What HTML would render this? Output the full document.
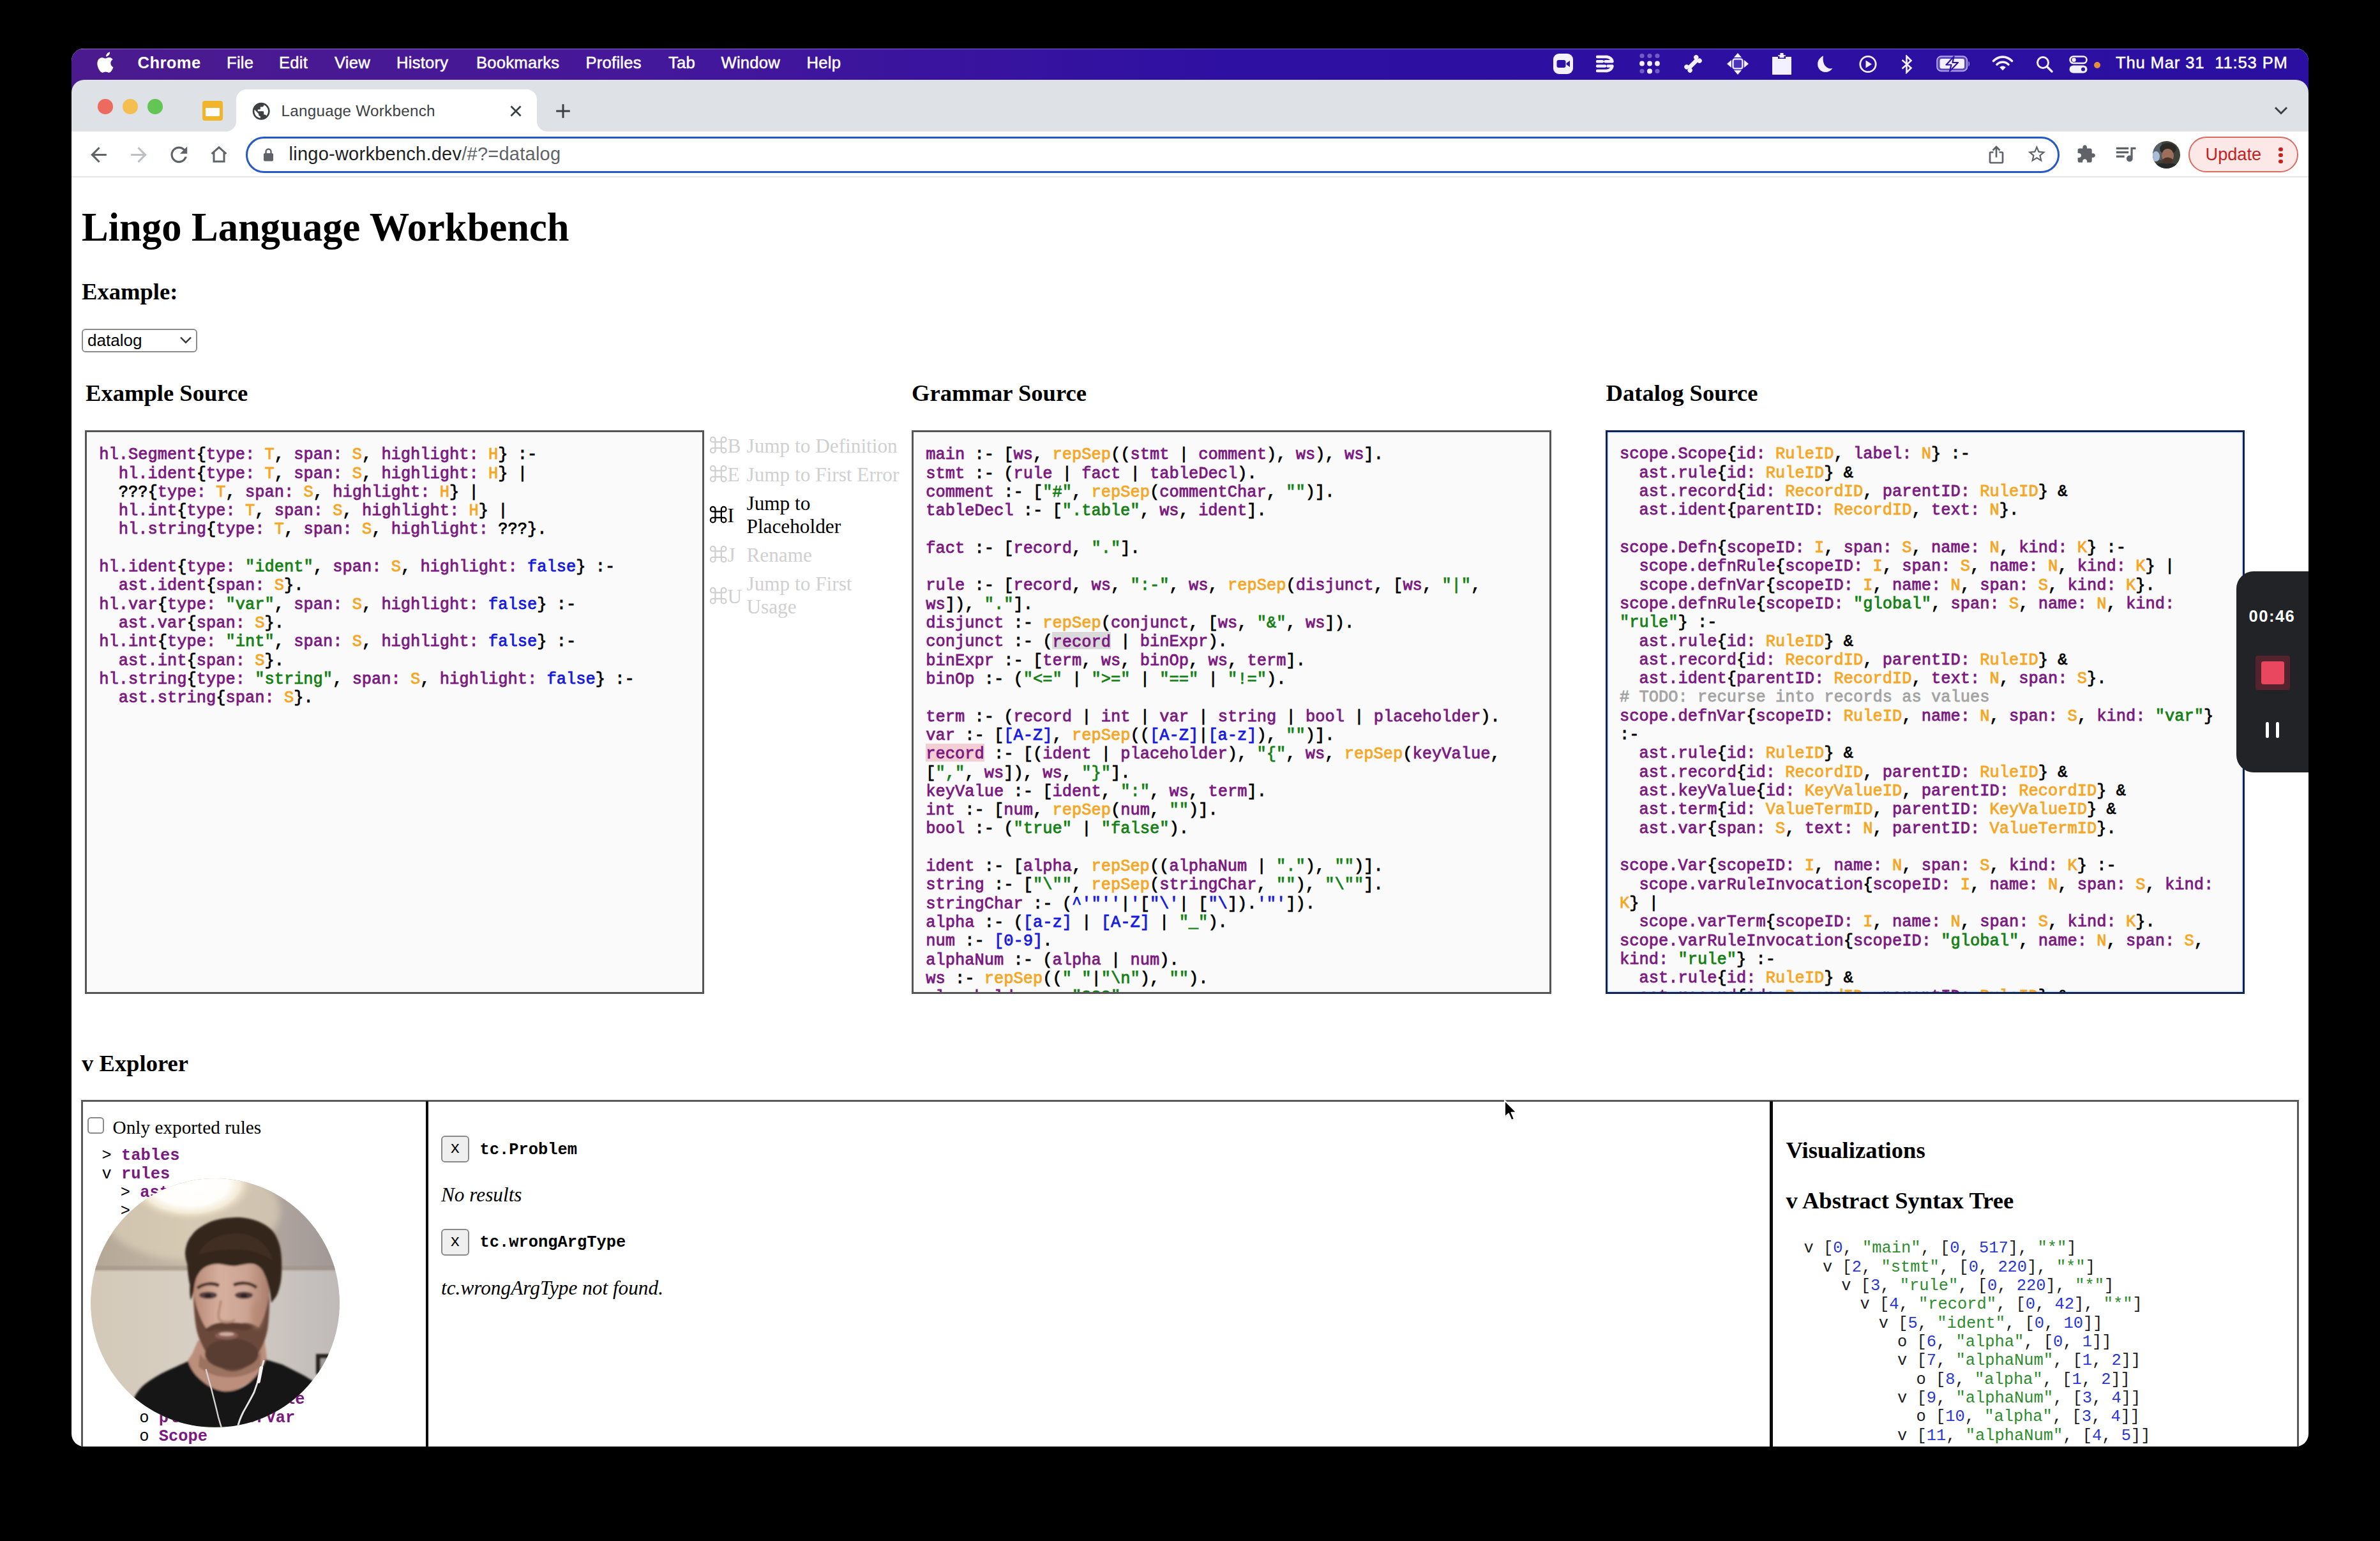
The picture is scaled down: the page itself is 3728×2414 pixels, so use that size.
<!DOCTYPE html>
<html><head><meta charset="utf-8"><title>Language Workbench</title>
<style>
*{box-sizing:border-box;margin:0;padding:0}
html,body{width:3728px;height:2414px;background:#000;overflow:hidden}
body{position:relative;font-family:"Liberation Serif",serif;color:#000}
.abs{position:absolute}
#win{position:absolute;left:112px;top:76px;width:3504px;height:2190px;border-radius:19.5px 19.5px 20px 20px;overflow:hidden;background:#fff}
#o{position:absolute;left:-112px;top:-76px;width:3728px;height:2414px}
#menubar{position:absolute;left:112px;top:76px;width:3504px;height:70px;box-shadow:inset 0 1.5px 0 rgba(255,255,255,.22);background:linear-gradient(90deg,#4b1a8e 0%,#45189a 25%,#2e10a2 52%,#2a0fa0 100%)}
#tabstrip{position:absolute;left:112px;top:125px;width:3504px;height:82px;background:#dee1e6;border-radius:20px 20px 0 0}
#toolbar{position:absolute;left:112px;top:206px;width:3504px;height:72px;background:#fff;border-bottom:2px solid #e3e4e7}
.mi{color:#fff;-webkit-text-stroke:0.5px #fff;letter-spacing:0.25px}
.b7{font-weight:bold}
.it{font-style:italic}
.ed{position:absolute;top:674px;height:883px;border:3px solid #555;background:#fafafa;overflow:hidden;padding:21.2px 0 0 19.2px}
.code{font-family:"Liberation Mono",monospace;font-weight:normal;-webkit-text-stroke:0.8px currentColor;font-size:25.41px;line-height:29.32px}
.code .l{height:29.32px;white-space:pre}
.i{color:#7b1780}.v{color:#f5a623}.s{color:#138013}.b{color:#1418e0}.c{color:#a3a3a3}
.hg{padding-top:1.8px;background:linear-gradient(#dadada,#dadada) no-repeat 0 0/100% 27.2px}.hp{padding-top:1.9px;background:linear-gradient(#f4ced5,#f4ced5) no-repeat 0 0/100% 28.4px}
.dis{color:#d0d0d0}
.ast{-webkit-text-stroke:0;color:#1c1c1c}.ast .s{color:#2c8c2c}.ast .b{color:#2a36d6}
.hb{font-weight:bold;-webkit-text-stroke:0}
.xb{position:absolute;width:43.6px;height:42px;border:2.4px solid #8a8a8a;border-radius:6px;background:#efefef;font-family:"Liberation Mono",monospace;font-size:25.4px;line-height:38px;text-align:center;color:#000}
</style></head><body>
<div id="win"><div id="o">
<div id="menubar"></div>
<svg class="abs" style="left:149px;top:80px" width="30" height="35.5" viewBox="0 0 170 205"><path fill="#fff" d="M150.4 172.6c-7.4 11-15.2 21.9-27.2 22.1-12 .2-15.8-7.1-29.4-7.1-13.7 0-17.9 6.9-29.2 7.3-11.7.4-20.6-11.8-28-22.8C21.3 150.1 9.700 108.600 25.400 81.200 33.200 67.600 47.100 59 62.200 58.800c11.500-.2 22.300 7.7 29.400 7.700 7 0 20.200-9.500 34-8.100 5.800.2 22.100 2.300 32.500 17.600-.8.5-19.400 11.300-19.200 33.800.3 26.900 23.600 35.800 23.900 35.900-.2.600-3.700 12.700-12.400 26.900zM106.500 22.400c6.200-7.500 16.800-13.100 25.500-13.600 1.100 10.200-3 20.400-9 27.700-6.100 7.300-16 13-25.800 12.200-1.300-9.900 3.600-20.300 9.300-26.300z"/></svg>
<div class="mi b7" style="position:absolute;white-space:nowrap;font-family:'Liberation Sans',sans-serif;font-size:25.6px;line-height:30.72px;left:215.5px;top:82.57px;-webkit-text-stroke:0;letter-spacing:0.4px">Chrome</div>
<div class="mi" style="position:absolute;white-space:nowrap;font-family:'Liberation Sans',sans-serif;font-size:25.6px;line-height:30.72px;left:355px;top:82.57px">File</div>
<div class="mi" style="position:absolute;white-space:nowrap;font-family:'Liberation Sans',sans-serif;font-size:25.6px;line-height:30.72px;left:437px;top:82.57px">Edit</div>
<div class="mi" style="position:absolute;white-space:nowrap;font-family:'Liberation Sans',sans-serif;font-size:25.6px;line-height:30.72px;left:524px;top:82.57px">View</div>
<div class="mi" style="position:absolute;white-space:nowrap;font-family:'Liberation Sans',sans-serif;font-size:25.6px;line-height:30.72px;left:621px;top:82.57px">History</div>
<div class="mi" style="position:absolute;white-space:nowrap;font-family:'Liberation Sans',sans-serif;font-size:25.6px;line-height:30.72px;left:746px;top:82.57px">Bookmarks</div>
<div class="mi" style="position:absolute;white-space:nowrap;font-family:'Liberation Sans',sans-serif;font-size:25.6px;line-height:30.72px;left:917.5px;top:82.57px">Profiles</div>
<div class="mi" style="position:absolute;white-space:nowrap;font-family:'Liberation Sans',sans-serif;font-size:25.6px;line-height:30.72px;left:1047px;top:82.57px">Tab</div>
<div class="mi" style="position:absolute;white-space:nowrap;font-family:'Liberation Sans',sans-serif;font-size:25.6px;line-height:30.72px;left:1129.5px;top:82.57px">Window</div>
<div class="mi" style="position:absolute;white-space:nowrap;font-family:'Liberation Sans',sans-serif;font-size:25.6px;line-height:30.72px;left:1263.5px;top:82.57px">Help</div>
<div class="mi" style="position:absolute;white-space:nowrap;font-family:'Liberation Sans',sans-serif;font-size:25.6px;line-height:30.72px;left:3314px;top:82.57px;letter-spacing:0.85px">Thu Mar 31&nbsp; 11:53 PM</div>
<!-- zoom -->
<svg class="abs" style="left:2433px;top:84px" width="31" height="32" viewBox="0 0 31 32"><rect x="0" y="0" width="31" height="32" rx="9" fill="#f3f0ff"/><rect x="5.500" y="10" width="14" height="12" rx="3" fill="#2d12a6"/><path d="M20.500 15L26 11v10l-5.500-4z" fill="#2d12a6"/></svg>
<!-- lines D -->
<svg class="abs" style="left:2500px;top:86px" width="28" height="28" viewBox="0 0 28 28"><g fill="none" stroke="#f3f0ff" stroke-width="4.500" stroke-linecap="round"><path d="M2 3H17"/><path d="M2 10.300H10"/><path d="M14.500 10.300H25"/><path d="M2 17.600H14"/><path d="M18.500 17.600H25"/><path d="M2 25H17"/><path d="M17 3C22 4 25 7 25.500 10.300"/><path d="M17 25C22 24 25 21 25.500 17.600"/></g></svg>
<!-- dots -->
<svg class="abs" style="left:2567px;top:83px" width="34" height="34" viewBox="0 0 34 34"><g fill="#f3f0ff"><circle cx="5" cy="4.500" r="3.600" opacity=".35"/><circle cx="17" cy="4.500" r="3.600" opacity=".35"/><circle cx="29" cy="4.500" r="3.600" opacity=".35"/><circle cx="5" cy="16.500" r="3.900"/><circle cx="17" cy="16.500" r="3.900"/><circle cx="29" cy="16.500" r="3.900"/><circle cx="5" cy="28.500" r="3.600" opacity=".35"/><circle cx="17" cy="28.500" r="4"/><circle cx="29" cy="28.500" r="3.600" opacity=".35"/></g></svg>
<!-- bone -->
<svg class="abs" style="left:2637px;top:85px" width="30" height="30" viewBox="0 0 30 30"><g transform="rotate(-45 15 15)" fill="#f3f0ff"><rect x="5" y="11.800" width="20" height="6.400" rx="1"/><circle cx="4.500" cy="11.300" r="3.700"/><circle cx="4.500" cy="18.700" r="3.700"/><circle cx="25.500" cy="11.300" r="3.700"/><circle cx="25.500" cy="18.700" r="3.700"/></g></svg>
<!-- move -->
<svg class="abs" style="left:2704px;top:82px" width="36" height="36" viewBox="0 0 36 36"><g fill="#f3f0ff"><path d="M18 1L24 8H12Z"/><path d="M18 35L24 28H12Z"/><path d="M1 18L8 12V24Z"/><path d="M35 18L28 12V24Z"/></g><rect x="10.500" y="10.500" width="15" height="15" rx="3" fill="#4a34b8" stroke="#e6e0ff" stroke-width="2.600"/></svg>
<!-- clipboard -->
<svg class="abs" style="left:2776px;top:83px" width="30" height="34" viewBox="0 0 30 34"><path d="M0 6H9V3.500H12.500V0H17.500V3.500H21V6H30V34H0Z" fill="#f3f0ff"/><rect x="9" y="5" width="12" height="4" fill="#2d12a6"/><rect x="11.500" y="3" width="7" height="4.500" fill="#f3f0ff"/></svg>
<!-- moon -->
<svg class="abs" style="left:2844px;top:87px" width="27" height="27" viewBox="0 0 27 27"><path d="M12 0.500C3 4.500 1 14.500 5.500 21C10.500 27.800 21 28 26.500 20C18 22.500 9.500 14.500 12 0.500Z" fill="#f3f0ff"/></svg>
<!-- play -->
<svg class="abs" style="left:2911px;top:86px" width="30" height="30" viewBox="0 0 30 30"><circle cx="15" cy="14.500" r="12.200" fill="none" stroke="#f3f0ff" stroke-width="2.800"/><path d="M11.500 8.500L21 14.500L11.500 20.500Z" fill="#f3f0ff"/></svg>
<!-- bluetooth -->
<svg class="abs" style="left:2976px;top:86px" width="22" height="30" viewBox="0 0 22 30"><path d="M3.500 8L17.500 20.500L10.500 27.500V2L17.500 9L3.500 21.500" fill="none" stroke="#f3f0ff" stroke-width="2.600" stroke-linejoin="miter"/></svg>
<!-- battery -->
<svg class="abs" style="left:3033px;top:87px" width="54" height="26" viewBox="0 0 54 26"><rect x="1.200" y="1.200" width="47" height="23" rx="6.500" fill="#5b47bd" stroke="#b5a8ef" stroke-width="2"/><rect x="5.500" y="5" width="38.500" height="15.500" rx="3" fill="#f3f0ff"/><path d="M50.500 9c2 .7 2 7.300 0 8z" fill="#b5a8ef"/><path d="M27.500 1.500L15.500 14.500H23.500L21 24.500L34 11H25.500Z" fill="#f3f0ff" stroke="#2d12a6" stroke-width="2.200" stroke-linejoin="round"/></svg>
<!-- wifi -->
<svg class="abs" style="left:3120px;top:86px" width="34" height="26" viewBox="0 0 34 26"><g fill="none" stroke="#f3f0ff" stroke-width="3.600" stroke-linecap="round"><path d="M2.500 9.500C11 1 23 1 31.500 9.500"/><path d="M8 15C13 10 21 10 26 15"/></g><path d="M17 24.500L12.200 19.300C15 16.900 19 16.900 21.800 19.300Z" fill="#f3f0ff"/></svg>
<!-- search -->
<svg class="abs" style="left:3189px;top:87px" width="28" height="28" viewBox="0 0 28 28"><circle cx="11" cy="11" r="8.500" fill="none" stroke="#f3f0ff" stroke-width="3"/><path d="M17.500 17.500L25 25" stroke="#f3f0ff" stroke-width="3.400" stroke-linecap="round"/></svg>
<!-- control center -->
<svg class="abs" style="left:3241px;top:87px" width="30" height="28" viewBox="0 0 30 28"><rect x="1.500" y="1.500" width="26" height="10.500" rx="5.200" fill="none" stroke="#f3f0ff" stroke-width="2.600"/><circle cx="7.500" cy="6.800" r="3.200" fill="#f3f0ff"/><rect x="0.500" y="15.500" width="28" height="12" rx="6" fill="#f3f0ff"/><circle cx="22" cy="21.500" r="3" fill="#2d12a6"/></svg>
<div class="abs" style="left:3279.500px;top:97px;width:10px;height:10px;border-radius:50%;background:#e58d3c"></div>
<div id="tabstrip"></div>
<div class="abs" style="left:153.1px;top:155.2px;width:23.6px;height:23.6px;border-radius:50%;background:#ed6a5e"></div>
<div class="abs" style="left:192.3px;top:155.2px;width:23.6px;height:23.6px;border-radius:50%;background:#f5bf4f"></div>
<div class="abs" style="left:231.2px;top:155.2px;width:23.6px;height:23.6px;border-radius:50%;background:#62c554"></div>
<div class="abs" style="left:317px;top:158px;width:32px;height:31px;border-radius:4px;background:#f1b52c"></div>
<div class="abs" style="left:322px;top:169px;width:22px;height:13px;border-radius:1px;background:#fff"></div>
<!-- active tab -->
<div class="abs" style="left:370px;top:140px;width:471px;height:68px;background:#fff;border-radius:16px 16px 0 0"></div>
<svg class="abs" style="left:354px;top:190px" width="16" height="16"><path d="M16 16H0A16 16 0 0 0 16 0Z" fill="#fff"/></svg>
<svg class="abs" style="left:841px;top:190px" width="16" height="16"><path d="M0 16H16A16 16 0 0 1 0 0Z" fill="#fff"/></svg>
<div class="abs" style="position:absolute;white-space:nowrap;font-family:'Liberation Sans',sans-serif;font-size:24.2px;line-height:29.04px;left:440.5px;top:158.69px;color:#3c4043;letter-spacing:0.28px">Language Workbench</div>
<div id="toolbar"></div>
<div class="abs" style="left:385px;top:214px;width:2841px;height:57px;border:3px solid #2459c8;border-radius:29px;background:#fff"></div>
<div class="abs" style="position:absolute;white-space:nowrap;font-family:'Liberation Sans',sans-serif;font-size:29px;line-height:34.8px;left:452.5px;top:224.35px;color:#5f6368;letter-spacing:0.25px"><span style="color:#202124">lingo-workbench.dev</span>/#?=datalog</div>
<div class="abs" style="left:3428px;top:214px;width:172px;height:56px;border:2px solid #dc6b62;border-radius:28px;background:#fce9e7"></div>
<div class="abs" style="position:absolute;white-space:nowrap;font-family:'Liberation Sans',sans-serif;font-size:27.2px;line-height:32.64px;left:3454.5px;top:225.86px;color:#c5221f">Update</div>
<!-- globe favicon -->
<svg class="abs" style="left:393px;top:157.700px" width="32.400" height="32.400" viewBox="0 0 24 24"><path fill="#3c4043" d="M12 2C6.480 2 2 6.480 2 12s4.480 10 10 10 10-4.480 10-10S17.520 2 12 2zm-1 17.930c-3.950-.49-7-3.850-7-7.930 0-.62.080-1.210.21-1.790L9 15v1c0 1.100.9 2 2 2v1.930zm6.900-2.540c-.26-.81-1-1.390-1.900-1.390h-1v-3c0-.55-.45-1-1-1H8v-2h2c.55 0 1-.45 1-1V7h2c1.100 0 2-.9 2-2v-.41c2.930 1.190 5 4.060 5 7.410 0 2.080-.8 3.970-2.100 5.390z"/></svg>
<!-- tab close -->
<svg class="abs" style="left:797.500px;top:164px" width="20" height="20" viewBox="0 0 20 20"><path d="M2.500 2.500L17.500 17.500M17.500 2.500L2.500 17.500" stroke="#3c4043" stroke-width="2.800" fill="none"/></svg>
<!-- plus -->
<svg class="abs" style="left:869.500px;top:162px" width="24" height="24" viewBox="0 0 24 24"><path d="M12 1.200V22.800M1.200 12H22.800" stroke="#3c4043" stroke-width="3" fill="none"/></svg>
<!-- chevron -->
<svg class="abs" style="left:3562px;top:166px" width="22" height="15" viewBox="0 0 22 15"><path d="M2 2.500L11 11.500L20 2.500" stroke="#3c4043" stroke-width="3" fill="none"/></svg>
<!-- back -->
<svg class="abs" style="left:136.300px;top:223.500px" width="37" height="37" viewBox="0 0 24 24"><path fill="#5f6368" d="M20 11H7.830l5.590-5.590L12 4l-8 8 8 8 1.410-1.410L7.830 13H20v-2z"/></svg>
<!-- forward -->
<svg class="abs" style="left:198.900px;top:223.500px" width="37" height="37" viewBox="0 0 24 24"><path fill="#bcbfc3" d="M12 4l-1.410 1.410L16.170 11H4v2h12.170l-5.580 5.590L12 20l8-8z"/></svg>
<!-- reload -->
<svg class="abs" style="left:261px;top:223.300px" width="38.700" height="38.700" viewBox="0 0 24 24"><path fill="#5f6368" d="M17.650 6.350C16.200 4.900 14.210 4 12 4c-4.420 0-7.990 3.580-7.990 8s3.570 8 7.990 8c3.730 0 6.840-2.550 7.730-6h-2.080c-.82 2.330-3.040 4-5.650 4-3.310 0-6-2.690-6-6s2.690-6 6-6c1.660 0 3.140.69 4.220 1.780L13 11h7V4l-2.350 2.350z"/></svg>
<!-- home -->
<svg class="abs" style="left:328px;top:227px" width="30" height="30" viewBox="0 0 30 30"><path d="M3.500 14L15 3.800L26.500 14M7 11.500V26H23V11.500" fill="none" stroke="#5f6368" stroke-width="3" stroke-linejoin="miter"/></svg>
<!-- lock -->
<svg class="abs" style="left:411px;top:231px" width="19" height="23" viewBox="0 0 19 23"><rect x="2" y="9" width="15" height="12.500" rx="1.800" fill="#5f6368"/><path d="M5.500 10V6.500a4 4 0 0 1 8 0V10" fill="none" stroke="#5f6368" stroke-width="2.400"/></svg>
<!-- share -->
<svg class="abs" style="left:3114px;top:227px" width="26" height="31" viewBox="0 0 26 31"><path d="M8.500 11.500H4.500a1.500 1.500 0 0 0-1.500 1.500V26.500a1.500 1.500 0 0 0 1.500 1.500H21.500a1.500 1.500 0 0 0 1.500-1.500V13a1.500 1.500 0 0 0-1.500-1.500H17.500" fill="none" stroke="#5f6368" stroke-width="2.700"/><path d="M13 19.500V4M7.500 8.500L13 3L18.500 8.500" fill="none" stroke="#5f6368" stroke-width="2.700"/></svg>
<!-- star -->
<svg class="abs" style="left:3173.600px;top:225.300px" width="32.800" height="32.800" viewBox="0 0 24 24"><path fill="#5f6368" d="M22 9.240l-7.190-.62L12 2 9.190 8.630 2 9.240l5.460 4.730L5.820 21 12 17.270 18.180 21l-1.630-7.030L22 9.240zM12 15.400l-3.760 2.270 1-4.280-3.320-2.880 4.380-.38L12 6.100l1.710 4.040 4.380.38-3.320 2.880 1 4.280L12 15.400z"/></svg>
<!-- puzzle -->
<svg class="abs" style="left:3252px;top:226.400px" width="31.200" height="31.200" viewBox="0 0 24 24"><path fill="#5f6368" d="M20.500 11H19V7c0-1.100-.9-2-2-2h-4V3.500C13 2.120 11.880 1 10.500 1S8 2.120 8 3.500V5H4c-1.100 0-1.990.9-1.990 2v3.800H3.500c1.490 0 2.700 1.210 2.700 2.700s-1.210 2.700-2.700 2.700H2V20c0 1.100.9 2 2 2h3.800v-1.500c0-1.490 1.210-2.700 2.700-2.700 1.490 0 2.700 1.210 2.700 2.700V22H17c1.100 0 2-.9 2-2v-4h1.500c1.380 0 2.500-1.120 2.500-2.500S21.880 11 20.500 11z"/></svg>
<!-- media -->
<svg class="abs" style="left:3310px;top:220.800px" width="38.700" height="38.700" viewBox="0 0 24 24"><path fill="#5f6368" d="M15 6H3v2h12V6zm0 4H3v2h12v-2zM3 16h8v-2H3v2zM17 6v8.180c-.31-.11-.65-.18-1-.18-1.660 0-3 1.340-3 3s1.340 3 3 3 3-1.340 3-3V8h3V6h-5z"/></svg>
<!-- avatar -->
<svg class="abs" style="left:3371.500px;top:220.700px" width="43" height="43" viewBox="0 0 43 43"><defs><clipPath id="av"><circle cx="21.500" cy="21.500" r="21.500"/></clipPath></defs><g clip-path="url(#av)"><rect width="43" height="43" fill="#3e4238"/><rect x="0" y="0" width="14" height="30" fill="#56606a"/><ellipse cx="5" cy="24" rx="6" ry="8" fill="#a9bdd6"/><ellipse cx="24" cy="12" rx="13" ry="9" fill="#2c2a24"/><ellipse cx="23.500" cy="23" rx="9.500" ry="11" fill="#9c6f5c"/><ellipse cx="23.500" cy="31" rx="8" ry="5.500" fill="#4a3329"/><path d="M0 43C4 34 14 33 22 36C30 33 40 35 43 43Z" fill="#26282a"/></g></svg>
<!-- dots -->
<div class="abs" style="left:3569.400px;top:231px;width:6.200px;height:6.200px;border-radius:50%;background:#c5221f"></div>
<div class="abs" style="left:3569.400px;top:240.200px;width:6.200px;height:6.200px;border-radius:50%;background:#c5221f"></div>
<div class="abs" style="left:3569.400px;top:249.500px;width:6.200px;height:6.200px;border-radius:50%;background:#c5221f"></div>
<div class="b7" style="position:absolute;white-space:nowrap;font-family:'Liberation Serif',serif;font-size:62.55px;line-height:75.06px;left:128px;top:319.36px">Lingo Language Workbench</div>
<div class="b7" style="position:absolute;white-space:nowrap;font-family:'Liberation Serif',serif;font-size:36.6px;line-height:43.92px;left:128px;top:434.69px">Example:</div>
<div class="abs" style="left:128px;top:515px;width:181px;height:37px;border:2.2px solid #8c8c8c;border-radius:6px;background:#fff"></div>
<div style="position:absolute;white-space:nowrap;font-family:'Liberation Sans',sans-serif;font-size:26.06px;line-height:31.27px;left:137px;top:518.34px">datalog</div>
<svg class="abs" style="left:281px;top:526px" width="20" height="14" viewBox="0 0 20 14"><path d="M2 2.5L10 10.5L18 2.5" fill="none" stroke="#333" stroke-width="2.4"/></svg>
<div class="b7" style="position:absolute;white-space:nowrap;font-family:'Liberation Serif',serif;font-size:36.6px;line-height:43.92px;left:134px;top:593.69px">Example Source</div>
<div class="b7" style="position:absolute;white-space:nowrap;font-family:'Liberation Serif',serif;font-size:36.6px;line-height:43.92px;left:1428px;top:593.69px">Grammar Source</div>
<div class="b7" style="position:absolute;white-space:nowrap;font-family:'Liberation Serif',serif;font-size:36.6px;line-height:43.92px;left:2515.5px;top:593.69px">Datalog Source</div>
<div class="ed code" style="left:133px;width:970px"><div class="l"><span class="i">hl.Segment</span>{<span class="i">type:</span> <span class="v">T</span>, <span class="i">span:</span> <span class="v">S</span>, <span class="i">highlight:</span> <span class="v">H</span>} :-</div>
<div class="l">  <span class="i">hl.ident</span>{<span class="i">type:</span> <span class="v">T</span>, <span class="i">span:</span> <span class="v">S</span>, <span class="i">highlight:</span> <span class="v">H</span>} |</div>
<div class="l">  ???{<span class="i">type:</span> <span class="v">T</span>, <span class="i">span:</span> <span class="v">S</span>, <span class="i">highlight:</span> <span class="v">H</span>} |</div>
<div class="l">  <span class="i">hl.int</span>{<span class="i">type:</span> <span class="v">T</span>, <span class="i">span:</span> <span class="v">S</span>, <span class="i">highlight:</span> <span class="v">H</span>} |</div>
<div class="l">  <span class="i">hl.string</span>{<span class="i">type:</span> <span class="v">T</span>, <span class="i">span:</span> <span class="v">S</span>, <span class="i">highlight:</span> ???}.</div>
<div class="l">&nbsp;</div>
<div class="l"><span class="i">hl.ident</span>{<span class="i">type:</span> <span class="s">"ident"</span>, <span class="i">span:</span> <span class="v">S</span>, <span class="i">highlight:</span> <span class="b">false</span>} :-</div>
<div class="l">  <span class="i">ast.ident</span>{<span class="i">span:</span> <span class="v">S</span>}.</div>
<div class="l"><span class="i">hl.var</span>{<span class="i">type:</span> <span class="s">"var"</span>, <span class="i">span:</span> <span class="v">S</span>, <span class="i">highlight:</span> <span class="b">false</span>} :-</div>
<div class="l">  <span class="i">ast.var</span>{<span class="i">span:</span> <span class="v">S</span>}.</div>
<div class="l"><span class="i">hl.int</span>{<span class="i">type:</span> <span class="s">"int"</span>, <span class="i">span:</span> <span class="v">S</span>, <span class="i">highlight:</span> <span class="b">false</span>} :-</div>
<div class="l">  <span class="i">ast.int</span>{<span class="i">span:</span> <span class="v">S</span>}.</div>
<div class="l"><span class="i">hl.string</span>{<span class="i">type:</span> <span class="s">"string"</span>, <span class="i">span:</span> <span class="v">S</span>, <span class="i">highlight:</span> <span class="b">false</span>} :-</div>
<div class="l">  <span class="i">ast.string</span>{<span class="i">span:</span> <span class="v">S</span>}.</div></div>
<div class="ed code" style="left:1428px;width:1002px"><div class="l"><span class="i">main</span> :- [<span class="i">ws</span>, <span class="v">repSep</span>((<span class="i">stmt</span> | <span class="i">comment</span>), <span class="i">ws</span>), <span class="i">ws</span>].</div>
<div class="l"><span class="i">stmt</span> :- (<span class="i">rule</span> | <span class="i">fact</span> | <span class="i">tableDecl</span>).</div>
<div class="l"><span class="i">comment</span> :- [<span class="s">"#"</span>, <span class="v">repSep</span>(<span class="i">commentChar</span>, <span class="s">""</span>)].</div>
<div class="l"><span class="i">tableDecl</span> :- [<span class="s">".table"</span>, <span class="i">ws</span>, <span class="i">ident</span>].</div>
<div class="l">&nbsp;</div>
<div class="l"><span class="i">fact</span> :- [<span class="i">record</span>, <span class="s">"."</span>].</div>
<div class="l">&nbsp;</div>
<div class="l"><span class="i">rule</span> :- [<span class="i">record</span>, <span class="i">ws</span>, <span class="s">":-"</span>, <span class="i">ws</span>, <span class="v">repSep</span>(<span class="i">disjunct</span>, [<span class="i">ws</span>, <span class="s">"|"</span>,</div>
<div class="l"><span class="i">ws</span>]), <span class="s">"."</span>].</div>
<div class="l"><span class="i">disjunct</span> :- <span class="v">repSep</span>(<span class="i">conjunct</span>, [<span class="i">ws</span>, <span class="s">"&amp;"</span>, <span class="i">ws</span>]).</div>
<div class="l"><span class="i">conjunct</span> :- (<span class="i hg">record</span> | <span class="i">binExpr</span>).</div>
<div class="l"><span class="i">binExpr</span> :- [<span class="i">term</span>, <span class="i">ws</span>, <span class="i">binOp</span>, <span class="i">ws</span>, <span class="i">term</span>].</div>
<div class="l"><span class="i">binOp</span> :- (<span class="s">"&lt;="</span> | <span class="s">"&gt;="</span> | <span class="s">"=="</span> | <span class="s">"!="</span>).</div>
<div class="l">&nbsp;</div>
<div class="l"><span class="i">term</span> :- (<span class="i">record</span> | <span class="i">int</span> | <span class="i">var</span> | <span class="i">string</span> | <span class="i">bool</span> | <span class="i">placeholder</span>).</div>
<div class="l"><span class="i">var</span> :- [<span class="b">[A-Z]</span>, <span class="v">repSep</span>((<span class="b">[A-Z]</span>|<span class="b">[a-z]</span>), <span class="s">""</span>)].</div>
<div class="l"><span class="i hp">record</span> :- [(<span class="i">ident</span> | <span class="i">placeholder</span>), <span class="s">"{"</span>, <span class="i">ws</span>, <span class="v">repSep</span>(<span class="i">keyValue</span>,</div>
<div class="l">[<span class="s">","</span>, <span class="i">ws</span>]), <span class="i">ws</span>, <span class="s">"}"</span>].</div>
<div class="l"><span class="i">keyValue</span> :- [<span class="i">ident</span>, <span class="s">":"</span>, <span class="i">ws</span>, <span class="i">term</span>].</div>
<div class="l"><span class="i">int</span> :- [<span class="i">num</span>, <span class="v">repSep</span>(<span class="i">num</span>, <span class="s">""</span>)].</div>
<div class="l"><span class="i">bool</span> :- (<span class="s">"true"</span> | <span class="s">"false"</span>).</div>
<div class="l">&nbsp;</div>
<div class="l"><span class="i">ident</span> :- [<span class="i">alpha</span>, <span class="v">repSep</span>((<span class="i">alphaNum</span> | <span class="s">"."</span>), <span class="s">""</span>)].</div>
<div class="l"><span class="i">string</span> :- [<span class="s">"\""</span>, <span class="v">repSep</span>(<span class="i">stringChar</span>, <span class="s">""</span>), <span class="s">"\""</span>].</div>
<div class="l"><span class="i">stringChar</span> :- (<span class="b">^'"''</span>|<span class="b">'</span>[<span class="b">"\'</span>| [<span class="b">"\</span>]).<span class="b">'"'</span>]).</div>
<div class="l"><span class="i">alpha</span> :- (<span class="b">[a-z]</span> | <span class="b">[A-Z]</span> | <span class="s">"_"</span>).</div>
<div class="l"><span class="i">num</span> :- <span class="b">[0-9]</span>.</div>
<div class="l"><span class="i">alphaNum</span> :- (<span class="i">alpha</span> | <span class="i">num</span>).</div>
<div class="l"><span class="i">ws</span> :- <span class="v">repSep</span>((<span class="s">" "</span>|<span class="s">"\n"</span>), <span class="s">""</span>).</div>
<div class="l"><span class="i">placeholder</span> :- <span class="s">"???"</span>.</div></div>
<div class="ed code" style="left:2515.2px;width:1001.3px;border:3.8px solid #0f2250;box-shadow:inset 0 0 0 1.6px #cde2fa;padding-left:18.9px;padding-top:20.4px"><div class="l"><span class="i">scope.Scope</span>{<span class="i">id:</span> <span class="v">RuleID</span>, <span class="i">label:</span> <span class="v">N</span>} :-</div>
<div class="l">  <span class="i">ast.rule</span>{<span class="i">id:</span> <span class="v">RuleID</span>} &amp;</div>
<div class="l">  <span class="i">ast.record</span>{<span class="i">id:</span> <span class="v">RecordID</span>, <span class="i">parentID:</span> <span class="v">RuleID</span>} &amp;</div>
<div class="l">  <span class="i">ast.ident</span>{<span class="i">parentID:</span> <span class="v">RecordID</span>, <span class="i">text:</span> <span class="v">N</span>}.</div>
<div class="l">&nbsp;</div>
<div class="l"><span class="i">scope.Defn</span>{<span class="i">scopeID:</span> <span class="v">I</span>, <span class="i">span:</span> <span class="v">S</span>, <span class="i">name:</span> <span class="v">N</span>, <span class="i">kind:</span> <span class="v">K</span>} :-</div>
<div class="l">  <span class="i">scope.defnRule</span>{<span class="i">scopeID:</span> <span class="v">I</span>, <span class="i">span:</span> <span class="v">S</span>, <span class="i">name:</span> <span class="v">N</span>, <span class="i">kind:</span> <span class="v">K</span>} |</div>
<div class="l">  <span class="i">scope.defnVar</span>{<span class="i">scopeID:</span> <span class="v">I</span>, <span class="i">name:</span> <span class="v">N</span>, <span class="i">span:</span> <span class="v">S</span>, <span class="i">kind:</span> <span class="v">K</span>}.</div>
<div class="l"><span class="i">scope.defnRule</span>{<span class="i">scopeID:</span> <span class="s">"global"</span>, <span class="i">span:</span> <span class="v">S</span>, <span class="i">name:</span> <span class="v">N</span>, <span class="i">kind:</span></div>
<div class="l"><span class="s">"rule"</span>} :-</div>
<div class="l">  <span class="i">ast.rule</span>{<span class="i">id:</span> <span class="v">RuleID</span>} &amp;</div>
<div class="l">  <span class="i">ast.record</span>{<span class="i">id:</span> <span class="v">RecordID</span>, <span class="i">parentID:</span> <span class="v">RuleID</span>} &amp;</div>
<div class="l">  <span class="i">ast.ident</span>{<span class="i">parentID:</span> <span class="v">RecordID</span>, <span class="i">text:</span> <span class="v">N</span>, <span class="i">span:</span> <span class="v">S</span>}.</div>
<div class="l"><span class="c"># TODO: recurse into records as values</span></div>
<div class="l"><span class="i">scope.defnVar</span>{<span class="i">scopeID:</span> <span class="v">RuleID</span>, <span class="i">name:</span> <span class="v">N</span>, <span class="i">span:</span> <span class="v">S</span>, <span class="i">kind:</span> <span class="s">"var"</span>}</div>
<div class="l">:-</div>
<div class="l">  <span class="i">ast.rule</span>{<span class="i">id:</span> <span class="v">RuleID</span>} &amp;</div>
<div class="l">  <span class="i">ast.record</span>{<span class="i">id:</span> <span class="v">RecordID</span>, <span class="i">parentID:</span> <span class="v">RuleID</span>} &amp;</div>
<div class="l">  <span class="i">ast.keyValue</span>{<span class="i">id:</span> <span class="v">KeyValueID</span>, <span class="i">parentID:</span> <span class="v">RecordID</span>} &amp;</div>
<div class="l">  <span class="i">ast.term</span>{<span class="i">id:</span> <span class="v">ValueTermID</span>, <span class="i">parentID:</span> <span class="v">KeyValueID</span>} &amp;</div>
<div class="l">  <span class="i">ast.var</span>{<span class="i">span:</span> <span class="v">S</span>, <span class="i">text:</span> <span class="v">N</span>, <span class="i">parentID:</span> <span class="v">ValueTermID</span>}.</div>
<div class="l">&nbsp;</div>
<div class="l"><span class="i">scope.Var</span>{<span class="i">scopeID:</span> <span class="v">I</span>, <span class="i">name:</span> <span class="v">N</span>, <span class="i">span:</span> <span class="v">S</span>, <span class="i">kind:</span> <span class="v">K</span>} :-</div>
<div class="l">  <span class="i">scope.varRuleInvocation</span>{<span class="i">scopeID:</span> <span class="v">I</span>, <span class="i">name:</span> <span class="v">N</span>, <span class="i">span:</span> <span class="v">S</span>, <span class="i">kind:</span></div>
<div class="l"><span class="v">K</span>} |</div>
<div class="l">  <span class="i">scope.varTerm</span>{<span class="i">scopeID:</span> <span class="v">I</span>, <span class="i">name:</span> <span class="v">N</span>, <span class="i">span:</span> <span class="v">S</span>, <span class="i">kind:</span> <span class="v">K</span>}.</div>
<div class="l"><span class="i">scope.varRuleInvocation</span>{<span class="i">scopeID:</span> <span class="s">"global"</span>, <span class="i">name:</span> <span class="v">N</span>, <span class="i">span:</span> <span class="v">S</span>,</div>
<div class="l"><span class="i">kind:</span> <span class="s">"rule"</span>} :-</div>
<div class="l">  <span class="i">ast.rule</span>{<span class="i">id:</span> <span class="v">RuleID</span>} &amp;</div>
<div class="l">  <span class="i">ast.record</span>{<span class="i">id:</span> <span class="v">RecordID</span>, <span class="i">parentID:</span> <span class="v">RuleID</span>} &amp;</div></div>
<!-- action menu -->
<svg class="abs" style="left:1108.8px;top:680.9px" width="32.300" height="32.300" viewBox="0 0 24 24"><path d="M8.500 8.500h7v7h-7z M8.500 8.500V5.700a2.800 2.800 0 1 0-2.800 2.800z M15.500 8.500h2.800a2.800 2.800 0 1 0-2.800-2.800z M15.500 15.500v2.800a2.800 2.800 0 1 0 2.800-2.800z M8.500 15.500H5.700a2.800 2.800 0 1 0 2.800 2.800z" fill="none" stroke="#d0d0d0" stroke-width="1.700"/></svg>
<div class="dis" style="position:absolute;white-space:nowrap;font-family:'Liberation Serif',serif;font-size:31.28px;line-height:37.54px;left:1139.5px;top:679.67px">B</div>
<div class="dis" style="position:absolute;white-space:nowrap;font-family:'Liberation Serif',serif;font-size:31.28px;line-height:37.54px;left:1169.5px;top:679.67px">Jump to Definition</div>
<svg class="abs" style="left:1108.8px;top:726.4px" width="32.300" height="32.300" viewBox="0 0 24 24"><path d="M8.500 8.500h7v7h-7z M8.500 8.500V5.700a2.800 2.800 0 1 0-2.800 2.800z M15.500 8.500h2.800a2.800 2.800 0 1 0-2.800-2.800z M15.500 15.500v2.800a2.800 2.800 0 1 0 2.800-2.800z M8.500 15.500H5.700a2.800 2.800 0 1 0 2.800 2.800z" fill="none" stroke="#d0d0d0" stroke-width="1.700"/></svg>
<div class="dis" style="position:absolute;white-space:nowrap;font-family:'Liberation Serif',serif;font-size:31.28px;line-height:37.54px;left:1139.5px;top:725.17px">E</div>
<div class="dis" style="position:absolute;white-space:nowrap;font-family:'Liberation Serif',serif;font-size:31.28px;line-height:37.54px;left:1169.5px;top:725.17px">Jump to First Error</div>
<svg class="abs" style="left:1108.8px;top:790.4px" width="32.300" height="32.300" viewBox="0 0 24 24"><path d="M8.500 8.500h7v7h-7z M8.500 8.500V5.700a2.800 2.800 0 1 0-2.800 2.800z M15.500 8.500h2.800a2.800 2.800 0 1 0-2.800-2.800z M15.500 15.500v2.800a2.800 2.800 0 1 0 2.800-2.800z M8.500 15.500H5.700a2.800 2.800 0 1 0 2.800 2.800z" fill="none" stroke="#000" stroke-width="1.700"/></svg>
<div style="position:absolute;white-space:nowrap;font-family:'Liberation Serif',serif;font-size:31.28px;line-height:37.54px;left:1139.5px;top:789.17px">I</div>
<div style="position:absolute;white-space:nowrap;font-family:'Liberation Serif',serif;font-size:31.28px;line-height:37.54px;left:1169.5px;top:769.67px">Jump to</div>
<div style="position:absolute;white-space:nowrap;font-family:'Liberation Serif',serif;font-size:31.28px;line-height:37.54px;left:1169.5px;top:806.17px">Placeholder</div>
<svg class="abs" style="left:1108.8px;top:852.4px" width="32.300" height="32.300" viewBox="0 0 24 24"><path d="M8.500 8.500h7v7h-7z M8.500 8.500V5.700a2.800 2.800 0 1 0-2.800 2.800z M15.500 8.500h2.800a2.800 2.800 0 1 0-2.800-2.800z M15.500 15.500v2.800a2.800 2.800 0 1 0 2.800-2.800z M8.500 15.500H5.700a2.800 2.800 0 1 0 2.800 2.800z" fill="none" stroke="#d0d0d0" stroke-width="1.700"/></svg>
<div class="dis" style="position:absolute;white-space:nowrap;font-family:'Liberation Serif',serif;font-size:31.28px;line-height:37.54px;left:1139.5px;top:851.17px">J</div>
<div class="dis" style="position:absolute;white-space:nowrap;font-family:'Liberation Serif',serif;font-size:31.28px;line-height:37.54px;left:1169.5px;top:851.17px">Rename</div>
<svg class="abs" style="left:1108.8px;top:916.9px" width="32.300" height="32.300" viewBox="0 0 24 24"><path d="M8.500 8.500h7v7h-7z M8.500 8.500V5.700a2.800 2.800 0 1 0-2.800 2.800z M15.500 8.500h2.800a2.800 2.800 0 1 0-2.800-2.800z M15.500 15.500v2.800a2.800 2.800 0 1 0 2.800-2.800z M8.500 15.500H5.700a2.800 2.800 0 1 0 2.800 2.800z" fill="none" stroke="#d0d0d0" stroke-width="1.700"/></svg>
<div class="dis" style="position:absolute;white-space:nowrap;font-family:'Liberation Serif',serif;font-size:31.28px;line-height:37.54px;left:1139.5px;top:915.67px">U</div>
<div class="dis" style="position:absolute;white-space:nowrap;font-family:'Liberation Serif',serif;font-size:31.28px;line-height:37.54px;left:1169.5px;top:895.67px">Jump to First</div>
<div class="dis" style="position:absolute;white-space:nowrap;font-family:'Liberation Serif',serif;font-size:31.28px;line-height:37.54px;left:1169.5px;top:932.17px">Usage</div>
<div class="b7" style="position:absolute;white-space:nowrap;font-family:'Liberation Serif',serif;font-size:36.6px;line-height:43.92px;left:128px;top:1643.69px">v Explorer</div>
<div class="abs" style="left:127.2px;top:1722.7px;width:3473.5px;height:600px;border:3px solid #5a5a5a"></div>
<div class="abs" style="left:667.2px;top:1724.5px;width:4.3px;height:600px;background:#0a0a0a"></div>
<div class="abs" style="left:2772.3px;top:1724.5px;width:4.3px;height:600px;background:#0a0a0a"></div>
<div class="abs" style="left:137.3px;top:1750.4px;width:25.4px;height:25.6px;border:2.4px solid #8a8a8a;border-radius:5.5px;background:#fff"></div>
<div style="position:absolute;white-space:nowrap;font-family:'Liberation Serif',serif;font-size:29.3px;line-height:35.16px;left:176.5px;top:1749.13px">Only exported rules</div>
<div class="code hb" style="position:absolute;white-space:nowrap;font-family:'Liberation Mono',monospace;font-size:25.41px;line-height:30.49px;left:159.5px;top:1795.59px;line-height:29.32px;white-space:pre"><span style="font-weight:normal">&gt;</span> <span class="i">tables</span></div>
<div class="code hb" style="position:absolute;white-space:nowrap;font-family:'Liberation Mono',monospace;font-size:25.41px;line-height:30.49px;left:159.5px;top:1824.89px;line-height:29.32px;white-space:pre"><span style="font-weight:normal">v</span> <span class="i">rules</span></div>
<div class="code hb" style="position:absolute;white-space:nowrap;font-family:'Liberation Mono',monospace;font-size:25.41px;line-height:30.49px;left:188.85px;top:1854.19px;line-height:29.32px;white-space:pre"><span style="font-weight:normal">&gt;</span> <span class="i">ast</span></div>
<div class="code hb" style="position:absolute;white-space:nowrap;font-family:'Liberation Mono',monospace;font-size:25.41px;line-height:30.49px;left:188.85px;top:1883.49px;line-height:29.32px;white-space:pre"><span style="font-weight:normal">&gt;</span> <span class="i">hl</span></div>
<div class="code hb" style="position:absolute;white-space:nowrap;font-family:'Liberation Mono',monospace;font-size:25.41px;line-height:30.49px;left:218.2px;top:2177.59px;line-height:29.32px;white-space:pre"><span style="font-weight:normal">o</span> <span class="i">placeholderRule</span></div>
<div class="code hb" style="position:absolute;white-space:nowrap;font-family:'Liberation Mono',monospace;font-size:25.41px;line-height:30.49px;left:218.2px;top:2206.89px;line-height:29.32px;white-space:pre"><span style="font-weight:normal">o</span> <span class="i">placeholderVar</span></div>
<div class="code hb" style="position:absolute;white-space:nowrap;font-family:'Liberation Mono',monospace;font-size:25.41px;line-height:30.49px;left:218.2px;top:2236.19px;line-height:29.32px;white-space:pre"><span style="font-weight:normal">o</span> <span class="i">Scope</span></div>
<!-- middle -->
<div class="xb" style="left:691px;top:1779.4px">x</div>
<div class="code hb" style="position:absolute;white-space:nowrap;font-family:'Liberation Mono',monospace;font-size:25.41px;line-height:30.49px;left:751.5px;top:1786.79px">tc.Problem</div>
<div class="it" style="position:absolute;white-space:nowrap;font-family:'Liberation Serif',serif;font-size:31.28px;line-height:37.54px;left:691px;top:1853.07px">No results</div>
<div class="xb" style="left:691px;top:1924.7px">x</div>
<div class="code hb" style="position:absolute;white-space:nowrap;font-family:'Liberation Mono',monospace;font-size:25.41px;line-height:30.49px;left:751.5px;top:1931.99px">tc.wrongArgType</div>
<div class="it" style="position:absolute;white-space:nowrap;font-family:'Liberation Serif',serif;font-size:31.28px;line-height:37.54px;left:691px;top:1999.27px">tc.wrongArgType not found.</div>
<!-- right -->
<div class="b7" style="position:absolute;white-space:nowrap;font-family:'Liberation Serif',serif;font-size:36.6px;line-height:43.92px;left:2797.5px;top:1779.99px">Visualizations</div>
<div class="b7" style="position:absolute;white-space:nowrap;font-family:'Liberation Serif',serif;font-size:36.6px;line-height:43.92px;left:2797.5px;top:1859.19px">v Abstract Syntax Tree</div>
<div class="code ast" style="position:absolute;white-space:nowrap;font-family:'Liberation Mono',monospace;font-size:25.41px;line-height:30.49px;left:2825.6px;top:1941.39px;white-space:pre">v [<span class="b">0</span>, <span class="s">"main"</span>, [<span class="b">0</span>, <span class="b">517</span>], <span class="s">"*"</span>]</div>
<div class="code ast" style="position:absolute;white-space:nowrap;font-family:'Liberation Mono',monospace;font-size:25.41px;line-height:30.49px;left:2854.9px;top:1970.71px;white-space:pre">v [<span class="b">2</span>, <span class="s">"stmt"</span>, [<span class="b">0</span>, <span class="b">220</span>], <span class="s">"*"</span>]</div>
<div class="code ast" style="position:absolute;white-space:nowrap;font-family:'Liberation Mono',monospace;font-size:25.41px;line-height:30.49px;left:2884.2px;top:2000.03px;white-space:pre">v [<span class="b">3</span>, <span class="s">"rule"</span>, [<span class="b">0</span>, <span class="b">220</span>], <span class="s">"*"</span>]</div>
<div class="code ast" style="position:absolute;white-space:nowrap;font-family:'Liberation Mono',monospace;font-size:25.41px;line-height:30.49px;left:2913.5px;top:2029.35px;white-space:pre">v [<span class="b">4</span>, <span class="s">"record"</span>, [<span class="b">0</span>, <span class="b">42</span>], <span class="s">"*"</span>]</div>
<div class="code ast" style="position:absolute;white-space:nowrap;font-family:'Liberation Mono',monospace;font-size:25.41px;line-height:30.49px;left:2942.8px;top:2058.67px;white-space:pre">v [<span class="b">5</span>, <span class="s">"ident"</span>, [<span class="b">0</span>, <span class="b">10</span>]]</div>
<div class="code ast" style="position:absolute;white-space:nowrap;font-family:'Liberation Mono',monospace;font-size:25.41px;line-height:30.49px;left:2972.1px;top:2087.99px;white-space:pre">o [<span class="b">6</span>, <span class="s">"alpha"</span>, [<span class="b">0</span>, <span class="b">1</span>]]</div>
<div class="code ast" style="position:absolute;white-space:nowrap;font-family:'Liberation Mono',monospace;font-size:25.41px;line-height:30.49px;left:2972.1px;top:2117.31px;white-space:pre">v [<span class="b">7</span>, <span class="s">"alphaNum"</span>, [<span class="b">1</span>, <span class="b">2</span>]]</div>
<div class="code ast" style="position:absolute;white-space:nowrap;font-family:'Liberation Mono',monospace;font-size:25.41px;line-height:30.49px;left:3001.4px;top:2146.63px;white-space:pre">o [<span class="b">8</span>, <span class="s">"alpha"</span>, [<span class="b">1</span>, <span class="b">2</span>]]</div>
<div class="code ast" style="position:absolute;white-space:nowrap;font-family:'Liberation Mono',monospace;font-size:25.41px;line-height:30.49px;left:2972.1px;top:2175.95px;white-space:pre">v [<span class="b">9</span>, <span class="s">"alphaNum"</span>, [<span class="b">3</span>, <span class="b">4</span>]]</div>
<div class="code ast" style="position:absolute;white-space:nowrap;font-family:'Liberation Mono',monospace;font-size:25.41px;line-height:30.49px;left:3001.4px;top:2205.27px;white-space:pre">o [<span class="b">10</span>, <span class="s">"alpha"</span>, [<span class="b">3</span>, <span class="b">4</span>]]</div>
<div class="code ast" style="position:absolute;white-space:nowrap;font-family:'Liberation Mono',monospace;font-size:25.41px;line-height:30.49px;left:2972.1px;top:2234.59px;white-space:pre">v [<span class="b">11</span>, <span class="s">"alphaNum"</span>, [<span class="b">4</span>, <span class="b">5</span>]]</div>

<!-- recorder -->
<div class="abs" style="left:3503px;top:895.300px;width:140px;height:315px;border-radius:27px;background:#222327"></div>
<div class="b7" style="position:absolute;white-space:nowrap;font-family:'Liberation Sans',sans-serif;font-size:25.6px;line-height:30.72px;left:3522.6px;top:949.77px;color:#fff;letter-spacing:1.45px">00:46</div>
<div class="abs" style="left:3532.500px;top:1027.200px;width:54.300px;height:54.100px;border-radius:4px;background:#54232d"></div>
<div class="abs" style="left:3541.600px;top:1036.400px;width:36px;height:35.700px;border-radius:3.500px;background:#e9465f"></div>
<div class="abs" style="left:3548.500px;top:1131.300px;width:5.500px;height:24.700px;border-radius:2.500px;background:#fff"></div>
<div class="abs" style="left:3564.600px;top:1131.300px;width:5.600px;height:24.700px;border-radius:2.500px;background:#fff"></div>
<!-- webcam -->
<svg class="abs" style="left:141px;top:1845px" width="392" height="392" viewBox="0 0 392 392">
<defs>
<clipPath id="cc"><circle cx="196" cy="196" r="195"/></clipPath>
<filter id="bl" x="-10%" y="-10%" width="120%" height="120%"><feGaussianBlur stdDeviation="1.800"/></filter>
<filter id="bl2" x="-30%" y="-30%" width="160%" height="160%"><feGaussianBlur stdDeviation="6"/></filter>
<filter id="bl3" x="-30%" y="-30%" width="160%" height="160%"><feGaussianBlur stdDeviation="3.200"/></filter>
<linearGradient id="ceil" x1="0" y1="0" x2="1" y2="0"><stop offset="0" stop-color="#b4a695"/><stop offset=".4" stop-color="#c4b8a6"/><stop offset=".7" stop-color="#b3a79f"/><stop offset="1" stop-color="#9f9796"/></linearGradient>
<linearGradient id="wall" x1="0" y1="0" x2="1" y2="0"><stop offset="0" stop-color="#d4c9b8"/><stop offset=".5" stop-color="#d7d0c5"/><stop offset="1" stop-color="#bfb9b9"/></linearGradient>
<radialGradient id="lamp" cx=".5" cy=".5" r=".5"><stop offset="0" stop-color="#fff"/><stop offset=".6" stop-color="#fffefb"/><stop offset=".78" stop-color="#f8efdc" stop-opacity=".9"/><stop offset="1" stop-color="#dccdb2" stop-opacity="0"/></radialGradient>
<linearGradient id="skin" x1="0" y1="0" x2="1" y2="0"><stop offset="0" stop-color="#b88a76"/><stop offset=".35" stop-color="#d6af9e"/><stop offset=".7" stop-color="#cda493"/><stop offset="1" stop-color="#a87c69"/></linearGradient>
</defs>
<g clip-path="url(#cc)">
<rect width="392" height="392" fill="url(#wall)"/>
<rect width="392" height="144" fill="url(#ceil)"/>
<rect y="138" width="392" height="8" fill="#9d9184" opacity=".5" filter="url(#bl)"/>
<ellipse cx="158" cy="52" rx="140" ry="78" fill="#e2d5bc" opacity=".6" filter="url(#bl2)"/>
<ellipse cx="157" cy="8" rx="100" ry="60" fill="url(#lamp)"/>
<!-- frame on wall -->
<g filter="url(#bl)"><rect x="354" y="276" width="34" height="32" fill="#25211f"/><rect x="361" y="283" width="30" height="22" fill="#a09a98"/></g>
<g filter="url(#bl)">
<!-- neck -->
<path d="M169 255L160 276L152 288L160 312L212 343L264 312L277 284L273 250Z" fill="#bb8f7b"/>
<path d="M172 276C190 300 240 304 268 272L268 296C240 318 196 318 170 296Z" fill="#8e6555" opacity=".7"/>
<!-- shirt -->
<path d="M153.700 287.200C135 296 120 302 109 308.200C97 315 88 321 81 327.700C75 334 71 340 68.500 346C60 362 55 380 52 392H392V338C380 330 365 324 349 318C343 314.500 338 311 332.300 308.200C322 303 312 298 301.600 292.800L275.100 284.400C270 298 264 306 257 313.700C246 326 230 334.700 212.300 334.700C196 334 180 324 167.600 311C161 304 156 296 153.700 287.200Z" fill="#141217"/>
<!-- face -->
<path d="M162 170C164 152 176 138 196 135C216 132 244 132 260 137C274 142 281 160 281 180C282 200 281 220 278 236C274 260 262 282 248 294C240 300 232 303 223 303C214 303 207 300 200 294C186 282 172 262 167 240C163 220 161 195 162 170Z" fill="url(#skin)"/>
<!-- cheek stubble / beard -->
<path d="M162 182C163 205 164 225 168 242C174 264 186 283 200 294C207 300 215 303.500 223 303.500C232 303.500 240 300 248 294C262 282 274 260 278 238C280 222 281 200 281 184C277 205 272 222 264 234C256 228 246 226 236 228C226 226 220 227 212 227C202 226 192 228 182 236C174 224 167 206 162 182Z" fill="#6a483a"/>
<ellipse cx="222" cy="276" rx="42" ry="24" fill="#5a3c30"/>
<path d="M180 238C192 228 206 226 214 229C224 226 240 226 256 234C250 240 240 240 232 238L196 238C190 240 184 241 180 238Z" fill="#5d3d30"/>
<!-- mouth -->
<ellipse cx="214" cy="247" rx="18" ry="6.500" fill="#8b5f55"/>
<ellipse cx="214" cy="245" rx="12" ry="2.800" fill="#d2b0a5"/>
<!-- hair -->
<path d="M152.300 135.100C149 126 148.500 118 149.500 112.800C151 104 154 96 159.200 90.500C164 83 171 78 178.800 73.700C187 69 196 66 206.700 64C216 62.500 225 62 234.600 62C244 62.500 254 64.500 262.500 68.100C271 71.500 279 76 284.800 82.100C291 89 295 98 297.400 107.200C299.500 116 300.200 126 300.200 135.100C300.500 145 300 155 298.800 163C297 172 295 180 291.800 185.400L284 196C283 186 282 177 279.300 168.600C277 160 274 152 270.900 146.300C267 140 262 137 256.900 135.100C248 133 238 137 229 137.900C220 139 210 136 201.100 135.100C193 135 185 137 178.800 140.700C173 145 169 151 166.200 157.500C164 164 163 172 162 179.800L158 192C156 184 156 176 156.500 168.600C154 158 153 146 152.300 135.100Z" fill="#35251e"/>
<path d="M170 120C180 96 210 84 240 88C262 92 280 106 286 130C270 118 250 112 226 112C204 112 184 116 170 120Z" fill="#432f26" opacity=".8"/>
<!-- eyes / brows -->
<ellipse cx="185" cy="184" rx="14" ry="5.500" fill="#54403f"/>
<ellipse cx="241" cy="184" rx="14" ry="5.500" fill="#54403f"/>
<ellipse cx="185" cy="185" rx="6" ry="3.500" fill="#2e2426"/>
<ellipse cx="241" cy="185" rx="6" ry="3.500" fill="#2e2426"/>
<path d="M168 173C178 165 193 164 202 169" stroke="#4a3228" stroke-width="5" fill="none"/>
<path d="M225 168C236 163 251 164 261 172" stroke="#4a3228" stroke-width="5" fill="none"/>
<!-- nose -->
<path d="M205 192C203 206 199 217 203 223C210 227 221 227 227 222" stroke="#b98b79" stroke-width="4" fill="none"/>
</g>
<ellipse cx="262" cy="215" rx="10" ry="22" fill="#b48470" opacity=".5" filter="url(#bl3)"/>
<!-- earbud wires -->
<path d="M272.300 285.800C271 292 269 297 268 300C266 310 262 322 257 336C251 348 245 358 240 367C236 375 233 382 231 392" stroke="#e6e3e3" stroke-width="2.800" fill="none"/>
<path d="M181.600 299.800C184 310 187 320 190 330.500C194 346 198 362 201 375C203 382 205 388 206 392" stroke="#d6d2d2" stroke-width="2.400" fill="none"/>
<rect x="263.500" y="295" width="5.500" height="27" rx="2.500" fill="#f6f4f4" transform="rotate(11 266 308)"/>
</g>
</svg>
<!-- cursor -->
<svg class="abs" style="left:2350px;top:1720px" width="34" height="42" viewBox="0 0 34 42"><path d="M7 4 L7 30 L13 24.500 L17.500 35 L22 33 L17.500 22.800 L25.500 22.500 Z" fill="#000" stroke="#fff" stroke-width="2" stroke-linejoin="round"/></svg>
</div></div>
</body></html>
